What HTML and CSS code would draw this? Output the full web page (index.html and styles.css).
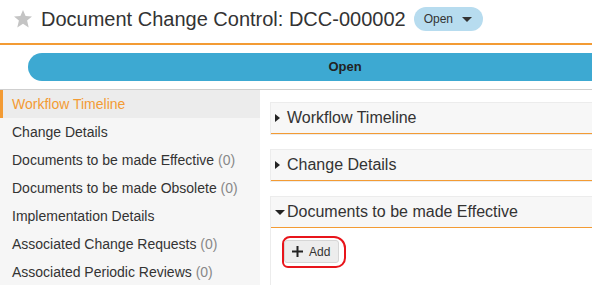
FILE: index.html
```html
<!DOCTYPE html>
<html lang="en">
<head>
  <meta charset="UTF-8">
  <title>Document Change Control</title>
  <link rel="stylesheet" href="styles.css">
</head>
<body>

<header class="page-head">
  <svg class="star" width="20" height="20" viewBox="0 0 20 20">
    <polygon points="10,1 12.6,7 19,7.4 14.1,11.6 15.7,18.6 10,14.8 4.3,18.6 5.9,11.6 1,7.4 7.4,7" fill="#c4c4c4"/>
  </svg>
  <h1>Document Change Control: DCC-000002</h1>
  <span class="status-pill">Open <span class="caret"></span></span>
</header>

<div class="status-row">
  <div class="status-bar">Open</div>
</div>

<div class="main">
  <nav class="sidebar">
    <a class="nav-item active">Workflow Timeline</a>
    <a class="nav-item">Change Details</a>
    <a class="nav-item">Documents to be made Effective <span class="count">(0)</span></a>
    <a class="nav-item">Documents to be made Obsolete <span class="count">(0)</span></a>
    <a class="nav-item">Implementation Details</a>
    <a class="nav-item">Associated Change Requests <span class="count">(0)</span></a>
    <a class="nav-item">Associated Periodic Reviews <span class="count">(0)</span></a>
  </nav>

  <section class="content">
    <div class="panel">
      <div class="panel-head"><span class="tri-right"></span>Workflow Timeline</div>
    </div>
    <div class="panel">
      <div class="panel-head"><span class="tri-right"></span>Change Details</div>
    </div>
    <div class="panel open">
      <div class="panel-head"><span class="tri-down"></span>Documents to be made Effective</div>
      <div class="panel-body">
        <span class="highlight">
          <button class="add-btn">
            <svg class="plus" width="11" height="11" viewBox="0 0 11 11">
              <path d="M5.5 0 V11 M0 5.5 H11" stroke="#222" stroke-width="2"/>
            </svg>
            Add
          </button>
        </span>
      </div>
    </div>
  </section>
</div>

</body>
</html>
```

FILE: styles.css
```css
/* General */
body {
  margin: 0;
  font-family: 'Liberation Sans', Arial, sans-serif;
  color: #333;
  background: #fff;
  overflow: hidden;
}

/* Header */
.page-head {
  display: flex;
  align-items: center;
  height: 43px;
  padding: 0 0 0 13px;
  border-bottom: 2px solid #f39b34;
  box-sizing: content-box;
}

.page-head .star {
  margin: -5px 8px 0 0;
}

.page-head h1 {
  margin: -5px 0 0 0;
  font-size: 20px;
  font-weight: normal;
  color: #333;
  white-space: nowrap;
}

.status-pill {
  display: inline-flex;
  align-items: center;
  height: 24px;
  margin: -5px 0 0 8px;
  padding: 0 11px 0 10px;
  border-radius: 12px;
  background: #b7dcef;
  font-size: 12px;
  color: #333;
}

.caret {
  display: inline-block;
  margin-left: 9px;
  border-left: 5px solid transparent;
  border-right: 5px solid transparent;
  border-top: 5px solid #333;
}

/* Status bar */
.status-row {
  padding: 8px 0 8px 28px;
  border-bottom: 1px solid #cfcfcf;
}

.status-bar {
  width: 634px;
  height: 28px;
  line-height: 28px;
  background: #3da9d2;
  border-radius: 14px 0 0 14px;
  text-align: center;
  font-weight: bold;
  font-size: 13px;
  color: #222;
}

/* Main area */
.main {
  display: flex;
}

.sidebar {
  width: 260px;
  flex-shrink: 0;
  background: #f6f6f6;
  padding-bottom: 20px;
}

.nav-item {
  display: block;
  height: 28px;
  line-height: 28px;
  padding-left: 12px;
  font-size: 14px;
  color: #333;
  white-space: nowrap;
}

.nav-item.active {
  background: #ececec;
  color: #f39b34;
  border-left: 3px solid #f39b34;
  padding-left: 9px;
}

.count {
  color: #888;
}

.content {
  flex: 1;
  padding: 12px 0 0 10px;
}

/* Panels */
.panel {
  margin-bottom: 14px;
  border: 1px solid #ececec;
  border-right: none;
}

.panel-head {
  display: flex;
  align-items: center;
  height: 30px;
  padding-left: 4px;
  background: #f7f7f7;
  border-bottom: 1px solid #f39b34;
  font-size: 16px;
  color: #333;
}

.tri-right {
  display: inline-block;
  margin-right: 7px;
  border-top: 4.5px solid transparent;
  border-bottom: 4.5px solid transparent;
  border-left: 5px solid #222;
}

.tri-down {
  display: inline-block;
  margin-right: 2px;
  border-left: 5px solid transparent;
  border-right: 5px solid transparent;
  border-top: 5px solid #222;
}

.panel-body {
  height: 60px;
  padding: 8px 0 0 11px;
  background: #fff;
}

.highlight {
  display: inline-block;
  padding: 2px 5px 3px 0;
  border: 2px solid #e8151b;
  border-radius: 8px 12px 10px 6px;
}

.add-btn {
  display: inline-flex;
  align-items: center;
  gap: 6px;
  height: 23px;
  padding: 0 8px 0 7px;
  background: #ededed;
  border: 1px solid #d6d6d6;
  border-radius: 3px;
  font-family: 'Liberation Sans', Arial, sans-serif;
  font-size: 12px;
  color: #333;
}
```
